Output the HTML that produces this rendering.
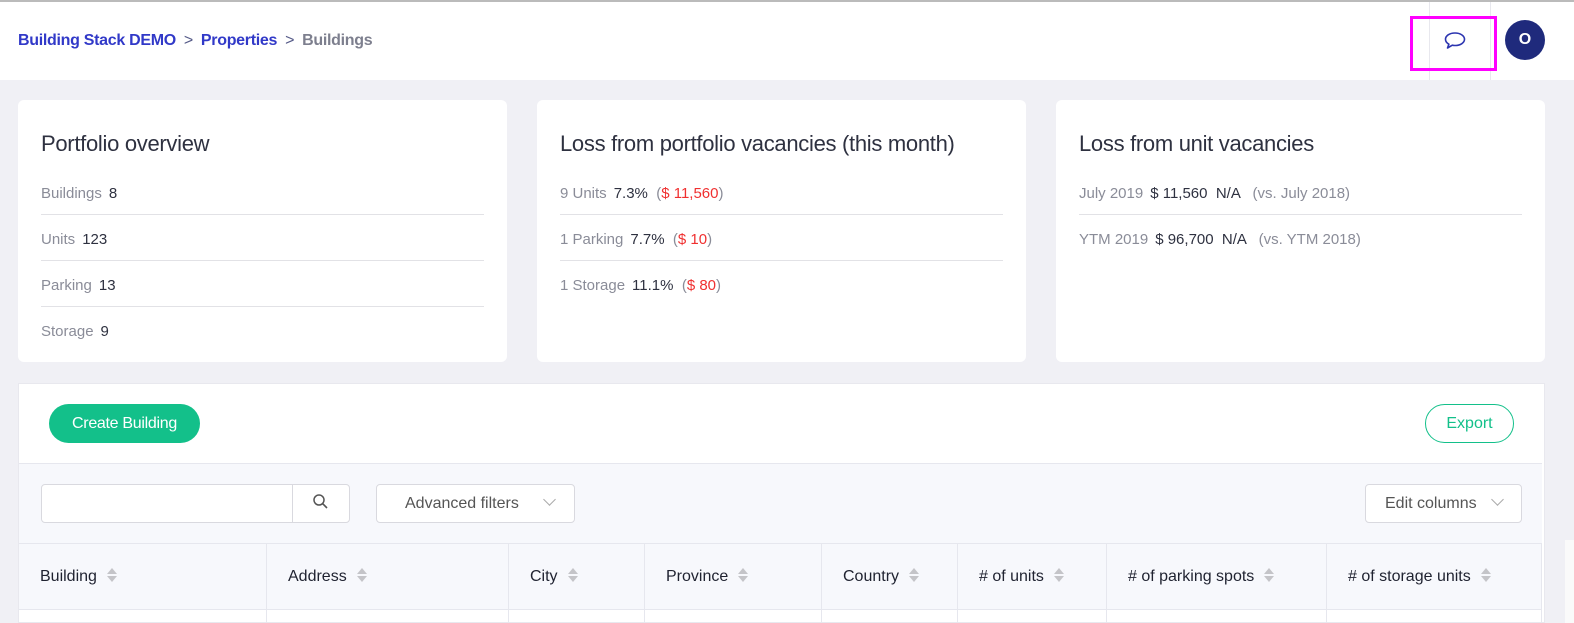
<!DOCTYPE html>
<html style="overflow:hidden"><head><meta charset="utf-8"><style>
*{box-sizing:border-box;margin:0;padding:0}
html,body{overflow:hidden}
body{width:1574px;height:623px;background:#f0f0f5;font-family:"Liberation Sans",sans-serif;position:relative;color:#333}
.a{position:absolute}
.hdr{left:0;top:0;width:1574px;height:80px;background:#fff;border-top:2px solid #bbb}
.bc{left:18px;top:32px;font-size:16px;font-weight:bold;color:#3139c8;letter-spacing:-0.3px;white-space:nowrap}
.bc .s{color:#555a88;font-weight:normal;margin:0 8px}
.bc .g{color:#7d7f8e}
.card{background:#fff;border-radius:6px;top:100px;height:262px;width:489px}
.card h2{position:absolute;left:23px;top:31px;font-size:22px;font-weight:normal;color:#2e3140;letter-spacing:-0.3px;white-space:nowrap}
.row{position:absolute;left:23px;right:23px;height:46px;font-size:15px;color:#2e3140;white-space:nowrap}
.row span.l{color:#8a8c98;margin-right:7px}
.row.b{border-bottom:1px solid #e2e2e6}
.red{color:#f03030}
.pan{left:18px;top:383px;width:1527px;height:240px;background:#fff;border:1px solid #e8e8ee}
.btn{left:49px;top:404px;width:151px;height:39px;border-radius:20px;background:#13c08a;color:#fff;font-size:16px;text-align:center;line-height:39px;letter-spacing:-0.3px}
.exp{left:1425px;top:404px;width:89px;height:39px;border-radius:20px;border:1px solid #13c08a;color:#13c08a;font-size:16px;text-align:center;line-height:37px}
.flt{left:19px;top:463px;width:1523px;height:81px;background:#f7f8fc;border-top:1px solid #e6e7ee}
.box{background:#fff;border:1px solid #d9d9df;border-radius:4px;height:39px;top:484px;font-size:16px;color:#555;line-height:37px;white-space:nowrap}
.th{left:19px;top:543px;width:1523px;height:67px;background:#f7f8fc;border-top:1px solid #e6e7ee;border-bottom:1px solid #e6e7ee}
.col{position:absolute;top:0;height:80px;border-left:1px solid #e6e7ee;font-size:16px;color:#1f2230;line-height:66px;padding-left:21px;white-space:nowrap}
.sort{display:inline-block;vertical-align:middle;margin-left:10px;width:10px;height:16px;position:relative;top:-2px}
.sort:before,.sort:after{content:"";position:absolute;left:0;border-left:5px solid transparent;border-right:5px solid transparent}
.sort:before{top:1px;border-bottom:6px solid #c4c4c8}
.sort:after{top:9px;border-top:6px solid #c4c4c8}
.chev{display:inline-block;width:9px;height:9px;border-right:1px solid #aaa;border-bottom:1px solid #aaa;transform:rotate(45deg);position:relative;top:-4px}
</style></head><body>
<div class="a hdr"></div>
<div class="a bc">Building Stack DEMO<span class="s">&gt;</span>Properties<span class="s">&gt;</span><span class="g">Buildings</span></div>
<div class="a" style="left:1429px;top:2px;width:1px;height:78px;background:#e8e8ee"></div>
<div class="a" style="left:1490px;top:2px;width:1px;height:78px;background:#e8e8ee"></div>
<div class="a" style="left:1410px;top:16px;width:87px;height:55px;border:3px solid #f0f"></div>
<svg class="a" style="left:1443px;top:31px" width="24" height="20" viewBox="0 0 24 20"><path d="M12 2C6.5 2 2.5 4.8 2.5 8.3c0 2 1.3 3.8 3.4 4.9L4.5 17l4.8-2.8c.9.2 1.8.3 2.7.3 5.5 0 9.5-2.8 9.5-6.2S17.5 2 12 2z" fill="none" stroke="#2c35b0" stroke-width="1.6" stroke-linejoin="round"/></svg>
<div class="a" style="left:1505px;top:20px;width:40px;height:40px;border-radius:50%;background:#1f2a7c;color:#fff;font-weight:bold;font-size:16px;text-align:center;line-height:40px">O</div>

<div class="a card" style="left:18px"><h2>Portfolio overview</h2>
<div class="row b" style="top:72px;line-height:43px;height:43px"><span class="l">Buildings</span>8</div>
<div class="row b" style="top:115px;line-height:49px"><span class="l">Units</span>123</div>
<div class="row b" style="top:161px;line-height:49px"><span class="l">Parking</span>13</div>
<div class="row" style="top:207px;line-height:49px"><span class="l">Storage</span>9</div></div>

<div class="a card" style="left:537px"><h2>Loss from portfolio vacancies (this month)</h2>
<div class="row b" style="top:72px;line-height:43px;height:43px"><span class="l">9 Units</span>7.3% &nbsp;<span class="l">(<span class="red">$ 11,560</span>)</span></div>
<div class="row b" style="top:115px;line-height:49px"><span class="l">1 Parking</span>7.7% &nbsp;<span class="l">(<span class="red">$ 10</span>)</span></div>
<div class="row" style="top:161px;line-height:49px"><span class="l">1 Storage</span>11.1% &nbsp;<span class="l">(<span class="red">$ 80</span>)</span></div></div>

<div class="a card" style="left:1056px"><h2>Loss from unit vacancies</h2>
<div class="row b" style="top:72px;line-height:43px;height:43px"><span class="l">July 2019</span>$ 11,560 &nbsp;N/A &nbsp;&nbsp;<span class="l">(vs. July 2018)</span></div>
<div class="row" style="top:115px;line-height:49px"><span class="l">YTM 2019</span>$ 96,700 &nbsp;N/A &nbsp;&nbsp;<span class="l">(vs. YTM 2018)</span></div></div>

<div class="a pan"></div>
<div class="a btn">Create Building</div>
<div class="a exp">Export</div>
<div class="a flt"></div>
<div class="a box" style="left:41px;width:309px"></div>
<div class="a" style="left:292px;top:484px;width:1px;height:39px;background:#d9d9df"></div>
<svg class="a" style="left:312px;top:493px" width="18" height="18" viewBox="0 0 18 18"><circle cx="7" cy="7" r="5" fill="none" stroke="#555" stroke-width="1.5"/><path d="M10.6 10.6L15 15" stroke="#555" stroke-width="1.6"/></svg>
<div class="a box" style="left:376px;width:199px;padding-left:28px">Advanced filters <span class="chev" style="margin-left:22px"></span></div>
<div class="a box" style="left:1365px;width:157px;padding-left:19px">Edit columns <span class="chev" style="margin-left:12px"></span></div>
<div class="a th">
<div class="col" style="left:0;border-left:none">Building<span class="sort"></span></div>
<div class="col" style="left:247px">Address<span class="sort"></span></div>
<div class="col" style="left:489px">City<span class="sort"></span></div>
<div class="col" style="left:625px">Province<span class="sort"></span></div>
<div class="col" style="left:802px">Country<span class="sort"></span></div>
<div class="col" style="left:938px">#  of units<span class="sort"></span></div>
<div class="col" style="left:1087px">#  of parking spots<span class="sort"></span></div>
<div class="col" style="left:1307px">#  of storage units<span class="sort"></span></div>
<div class="col" style="left:1522px"></div>
</div>
<div class="a" style="left:1565px;top:540px;width:9px;height:83px;background:#fafafa"></div>
</body></html>
